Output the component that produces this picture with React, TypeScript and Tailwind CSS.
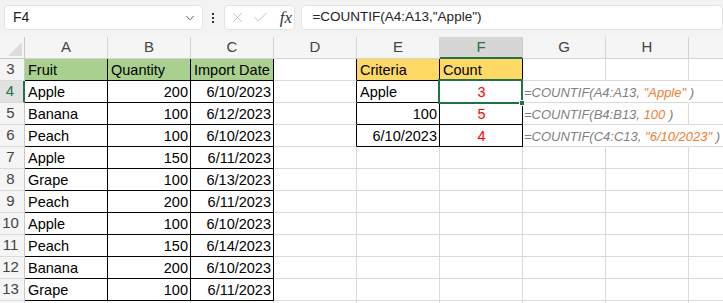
import { ChevronDown, X, Check } from "lucide-react";

const COLS = ["A", "B", "C", "D", "E", "F", "G", "H", "I"];

const fruit = ["Fruit", "Apple", "Banana", "Peach", "Apple", "Grape", "Peach", "Apple", "Peach", "Banana", "Grape"];
const qty = ["Quantity", "200", "100", "100", "150", "100", "200", "100", "150", "200", "100"];
const dates = [
  "Import Date", "6/10/2023", "6/12/2023", "6/10/2023", "6/11/2023", "6/13/2023",
  "6/11/2023", "6/10/2023", "6/14/2023", "6/10/2023", "6/11/2023",
];

const criteria: Record<number, { e: string; f: string; right?: boolean }> = {
  3: { e: "Criteria", f: "Count" },
  4: { e: "Apple", f: "3" },
  5: { e: "100", f: "5", right: true },
  6: { e: "6/10/2023", f: "4", right: true },
};

const ROWS = [3, 4, 5, 6, 7, 8, 9, 10, 11, 12, 13, 14];

function inTable(r: number, c: number) {
  if (c >= 0 && c <= 2 && r >= 3 && r <= 13) return true;
  if (c >= 4 && c <= 5 && r >= 3 && r <= 6) return true;
  return false;
}

// gridlines hidden where the G-column notes spill over
function hideRight(r: number, c: number) {
  if (c === 6 && r >= 4 && r <= 6) return true;
  if (c === 7 && (r === 4 || r === 6)) return true;
  return false;
}

function Note({ range, arg, quoted }: { range: string; arg: string; quoted?: boolean }) {
  return (
    <span className="italic text-[13px] text-[#7f7f7f] whitespace-nowrap">
      =COUNTIF({range},{" "}
      <span className="text-[#ed7d31]">{quoted ? `"${arg}"` : arg}</span> )
    </span>
  );
}

const notes: Record<number, React.ReactNode> = {
  4: <Note range="A4:A13" arg="Apple" quoted />,
  5: <Note range="B4:B13" arg="100" />,
  6: <Note range="C4:C13" arg="6/10/2023" quoted />,
};

function cellContent(r: number, c: number) {
  if (c <= 2 && r <= 13) {
    const i = r - 3;
    if (c === 0) return { text: fruit[i], align: "left" };
    if (c === 1) return { text: qty[i], align: r === 3 ? "left" : "right" };
    return { text: dates[i], align: r === 3 ? "left" : "right" };
  }
  const row = criteria[r];
  if (row && c === 4) return { text: row.e, align: row.right ? "right" : "left" };
  if (row && c === 5) return { text: row.f, align: r === 3 ? "left" : "center" };
  return null;
}

function Cell({ r, c }: { r: number; c: number }) {
  const right = hideRight(r, c)
    ? "border-r-transparent"
    : inTable(r, c) || inTable(r, c + 1)
    ? "border-r-black"
    : "border-r-[#dadada]";
  const bottom = inTable(r, c) || inTable(r + 1, c) ? "border-b-black" : "border-b-[#dadada]";
  let bg = "";
  if (r === 3 && c <= 2) bg = "bg-[#a9d08e]";
  if (r === 3 && (c === 4 || c === 5)) bg = "bg-[#ffd966]";
  const content = cellContent(r, c);
  const red = c === 5 && r >= 4 && r <= 6;
  const align =
    content?.align === "right" ? "justify-end" : content?.align === "center" ? "justify-center" : "justify-start";

  return (
    <div
      className={`w-[83px] h-[22px] shrink-0 border-r border-b ${right} ${bottom} ${bg} flex ${align} pl-[3px] pr-[2px] leading-[22px] text-[14.5px] ${
        red ? "text-[#ff0000]" : "text-black"
      } whitespace-nowrap`}
    >
      {c === 6 && notes[r] ? <span className="-ml-[2px]">{notes[r]}</span> : content?.text}
    </div>
  );
}

function FormulaBar() {
  return (
    <div className="h-[37px] bg-[#f3f3f3] flex items-start pt-[5px] pl-[4px]">
      <div className="w-[203px] h-[25px] bg-white border border-[#e3e3e3] rounded-[4px] flex items-center justify-between pl-[8px] pr-[5px]">
        <span className="text-[14px] text-[#222]">F4</span>
        <ChevronDown size={14} strokeWidth={1.6} className="text-[#555]" />
      </div>
      <div className="w-[21px] h-[25px] flex flex-col items-center justify-center gap-[2px]">
        <span className="w-[2px] h-[2px] bg-[#333]" />
        <span className="w-[2px] h-[2px] bg-[#333]" />
        <span className="w-[2px] h-[2px] bg-[#333]" />
      </div>
      <div className="w-[73px] h-[25px] bg-white border border-[#e3e3e3] rounded-[4px] flex items-center pl-[4px] gap-[6px]">
        <X size={17} strokeWidth={1.1} className="text-[#b4b4b4]" />
        <Check size={17} strokeWidth={1.1} className="text-[#b4b4b4]" />
        <span className="font-['Liberation_Serif',serif] italic text-[17px] leading-none text-[#333] ml-[5px]">fx</span>
      </div>
      <div className="ml-[6px] w-[430px] h-[25px] bg-white border border-[#e3e3e3] rounded-[4px] flex items-center pl-[10px]">
        <span className="text-[13.5px] text-[#222]">=COUNTIF(A4:A13,"Apple")</span>
      </div>
    </div>
  );
}

function HeaderRow() {
  return (
    <div className="flex h-[22px]">
      <div className="w-[25px] h-[22px] shrink-0 bg-[#f5f5f5] border-r border-b border-[#c8c8c8] flex items-end justify-end p-[2px]">
        <svg width="14" height="14" viewBox="0 0 14 14">
          <polygon points="14,0 14,14 0,14" fill="#dcdcdc" />
        </svg>
      </div>
      {COLS.map((l) =>
        l === "F" ? (
          <div
            key={l}
            className="w-[83px] h-[22px] shrink-0 bg-[#d6d6d6] border-r border-r-[#c8c8c8] border-b-2 border-b-[#217346] flex items-center justify-center text-[15px] text-[#217346]"
          >
            {l}
          </div>
        ) : (
          <div
            key={l}
            className="w-[83px] h-[22px] shrink-0 bg-[#f5f5f5] border-r border-b border-[#d4d4d4] flex items-center justify-center text-[15px] text-[#444]"
          >
            {l}
          </div>
        )
      )}
    </div>
  );
}

export default function App() {
  return (
    <div className="w-[723px] h-[303px] overflow-hidden bg-white font-['Liberation_Sans',Arial,sans-serif]">
      <FormulaBar />
      <div className="relative">
        <HeaderRow />
        {ROWS.map((r) => (
          <div key={r} className="flex h-[22px]">
            <div
              className={`w-[25px] h-[22px] shrink-0 border-b border-b-[#dadada] flex items-center justify-center pr-[3px] text-[15px] ${
                r === 4
                  ? "bg-[#e1e1e1] border-r-2 border-r-[#217346] text-[#217346]"
                  : "bg-[#f5f5f5] border-r border-r-[#c8c8c8] text-[#444]"
              }`}
            >
              {r}
            </div>
            {COLS.map((_, c) => (
              <Cell key={c} r={r} c={c} />
            ))}
          </div>
        ))}

        {/* active cell F4 */}
        <div className="absolute left-[438px] top-[42px] w-[85px] h-[25px] border-2 border-[#217346] pointer-events-none" />
        <div className="absolute left-[519px] top-[63px] w-[6px] h-[6px] bg-[#217346] border border-white" />
      </div>
    </div>
  );
}
